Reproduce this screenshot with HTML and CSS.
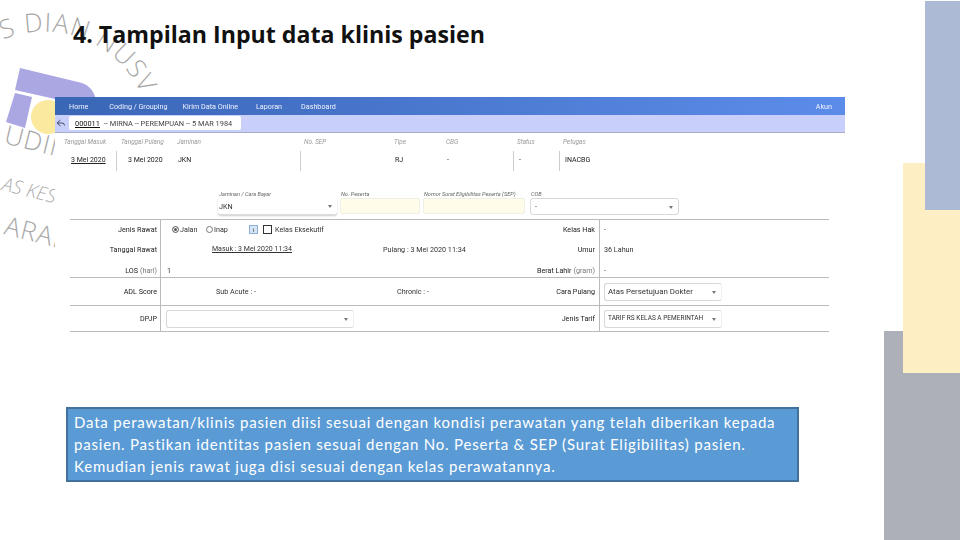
FILE: index.html
```html
<!DOCTYPE html>
<html lang="id">
<head>
<meta charset="utf-8">
<title>Tampilan Input data klinis pasien</title>
<link rel="stylesheet" href="styles.css">
</head>
<body>
<div class="slide">
  <div class="deco deco-grey"></div>
  <div class="deco deco-yellow"></div>
  <div class="deco deco-blue"></div>
  <svg class="watermark" width="200" height="260" viewBox="0 0 200 260">
    <defs><path id="arc" d="M-6 44 A107 107 0 0 1 151 139"/></defs>
    <text class="wm-text"><textPath href="#arc" startOffset="10">S DIAN NUSV</textPath></text>
    <path class="wm-logo" d="M20 68 L82 83 Q92 86 96 99 L55 99 L15 90 Z"/>
    <path class="wm-logo" d="M15 93 L32 97 L25 128 L6 122 Z"/>
    <circle class="wm-sun" cx="48" cy="117" r="17"/>
    <text class="wm-text" transform="translate(3 143) rotate(14)">UDIN</text>
    <text class="wm-small" transform="translate(1 190) rotate(14)">AS KES</text>
    <text class="wm-text" transform="translate(3 234) rotate(14)">ARAN</text>
  </svg>
  <h1 class="title">4. Tampilan Input data klinis pasien</h1>
  <div class="shot">
    <nav class="nav">
      <span>Home</span><span>Coding / Grouping</span><span>Kirim Data Online</span><span>Laporan</span><span>Dashboard</span>
      <span class="nav-end">Akun</span>
    </nav>
    <div class="subbar">
      <svg class="back" width="10" height="9" viewBox="0 0 10 9"><path d="M4.500 1 L1 4 L4.500 7 M1 4 H6 Q8.500 4 8.500 6.500" fill="none" stroke="#44506e" stroke-width="1"/></svg>
      <div class="pill"><u>000011</u> -- MIRNA -- PEREMPUAN -- 5 MAR 1984</div>
    </div>
    <div class="info">
      <div class="info-col c1"><label>Tanggal Masuk</label><div class="val"><u>3 Mei 2020</u></div></div>
      <div class="info-col c2"><label>Tanggal Pulang</label><div class="val sep">3 Mei 2020</div></div>
      <div class="info-col c3"><label>Jaminan</label><div class="val">JKN</div></div>
      <div class="info-col c4"><label>No. SEP</label><div class="val sep">&nbsp;</div></div>
      <div class="info-col c5"><label>Tipe</label><div class="val">RJ</div></div>
      <div class="info-col c6"><label>CBG</label><div class="val">-</div></div>
      <div class="info-col c7"><label>Status</label><div class="val sep">-</div></div>
      <div class="info-col c8"><label>Petugas</label><div class="val sep">INACBG</div></div>
    </div>
    <div class="fields">
      <div class="field f1"><label>Jaminan / Cara Bayar</label><div class="select flat">JKN<i class="caret"></i></div></div>
      <div class="field f2"><label>No. Peserta</label><div class="input"></div></div>
      <div class="field f3"><label>Nomor Surat Eligibilitas Peserta (SEP)</label><div class="input"></div></div>
      <div class="field f4"><label>COB</label><div class="select">-<i class="caret"></i></div></div>
    </div>
    <div class="table">
      <div class="group g1">
        <div class="th">Jenis Rawat</div>
        <div class="td radios">
          <span class="radio on"></span><span class="opt o1">Jalan</span>
          <span class="radio"></span><span class="opt o2">Inap</span>
          <span class="ibox">i</span><span class="check"></span><span>Kelas Eksekutif</span>
        </div>
        <div class="th2">Kelas Hak</div><div class="td3">-</div>
        <div class="th">Tanggal Rawat</div>
        <div class="td split s1"><span class="a"><u>Masuk : 3 Mei 2020 11:34</u></span><span>Pulang : 3 Mei 2020 11:34</span></div>
        <div class="th2">Umur</div><div class="td3">36 Lahun</div>
        <div class="th r3">LOS <em>(hari)</em></div>
        <div class="td r3">1</div>
        <div class="th2 r3">Berat Lahir <em>(gram)</em></div><div class="td3 r3">-</div>
      </div>
      <div class="group g2">
        <div class="th">ADL Score</div>
        <div class="td split s2"><span class="a">Sub Acute : -</span><span>Chronic : -</span></div>
        <div class="th2">Cara Pulang</div>
        <div class="td3"><div class="select small">Atas Persetujuan Dokter<i class="caret"></i></div></div>
      </div>
      <div class="group g3">
        <div class="th">DPJP</div>
        <div class="td"><div class="select dpjp"><i class="caret"></i></div></div>
        <div class="th2">Jenis Tarif</div>
        <div class="td3"><div class="select small tarif">TARIF RS KELAS A PEMERINTAH<i class="caret"></i></div></div>
      </div>
    </div>
  </div>
  <div class="caption">Data perawatan/klinis pasien diisi sesuai dengan kondisi perawatan yang telah diberikan kepada<br>pasien. Pastikan identitas pasien sesuai dengan No. Peserta &amp; SEP (Surat Eligibilitas) pasien.<br>Kemudian jenis rawat juga disi sesuai dengan kelas perawatannya.</div>
</div>
</body>
</html>
```
FILE: styles.css
```css
* { box-sizing: border-box; }
html, body { margin: 0; padding: 0; background: #fff; }
.slide { position: relative; width: 960px; height: 540px; overflow: hidden; background: #fff; font-family: "Liberation Sans", sans-serif; }

.deco { position: absolute; }
.deco-blue { left: 925px; top: 1px; width: 35px; height: 209px; background: #adbad6; }
.deco-yellow { left: 903px; top: 163px; width: 57px; height: 210px; background: #fdeec4; }
.deco-grey { left: 884px; top: 331px; width: 76px; height: 209px; background: #adb0b8; }

.watermark { position: absolute; left: 0; top: 0; }
.wm-text { font: 300 26px "Open Sans", sans-serif; fill: #a8a8a8; letter-spacing: 1px; }
.wm-small { font: 300 19px "Open Sans", sans-serif; fill: #adadad; font-style: italic; }
.wm-logo { fill: #aaa7e2; }
.wm-sun { fill: #fbe99f; }

.title { position: relative; margin: 0; padding: 19px 0 0 73px; height: 97px; font: 700 23.160px/30px "Open Sans", sans-serif; color: #111; }

.shot { position: relative; margin-left: 55px; width: 790px; height: 238px; background: #fff; font: 7.200px/11px Roboto, sans-serif; color: #333; filter: blur(.35px); }

.nav { display: flex; align-items: center; height: 18px; padding: 0 13px 0 14px; background: linear-gradient(90deg, #3a66b6, #5c8cea); color: #eef2ff; font-size: 7.200px; }
.nav span:nth-child(1) { margin-right: 21px; }
.nav span:nth-child(2) { margin-right: 15px; }
.nav span:nth-child(3) { margin-right: 18px; }
.nav span:nth-child(4) { margin-right: 19px; }
.nav-end { margin-left: auto; }

.subbar { display: flex; align-items: center; height: 18px; padding-left: 1px; background: #c8cffa; border-bottom: 1px solid #a9adc5; }
.back { margin-right: 3px; }
.pill { display: flex; align-items: center; gap: 2px; width: 172px; height: 14px; padding-left: 6px; margin-bottom: 1px; background: #fff; border-radius: 2px; color: #444; white-space: pre; font-size: 7.400px; }
.pill u { color: #111; }

.info { display: grid; grid-template-columns: 56px 61px 123px 90px 52px 71px 46px 100px; height: 57px; padding-top: 4px; margin-left: 5px; }
.info-col label { display: block; height: 13px; padding-left: 4px; font-size: 6.400px; font-style: italic; color: #999; }
.c2 label { padding-left: 5px; }
.c3 label { padding-left: 0; }
.val { height: 20px; margin-top: 1px; padding: 4px 0 0 5px; color: #222; font-size: 7px; }
.c1 .val { padding-left: 11px; }
.c2 .val { padding-left: 11px; }
.c3 .val { padding-left: 1px; }
.sep { border-left: 1px solid #ccc; }

.fields { display: flex; height: 29px; padding-left: 163px; }
.field label { display: block; height: 8px; padding-left: 1px; font-size: 5.600px; line-height: 8px; font-style: italic; color: #666; white-space: nowrap; }
.f1 { width: 122px; } .f2 { width: 83px; } .f3 { width: 107px; } .f4 { width: 149px; }
.input { width: 80px; height: 16px; background: #fffde9; border-radius: 2px; border: 1px solid #f0efe6; }
.f3 .input { width: 102px; }
.select { position: relative; display: flex; align-items: center; height: 17px; padding-left: 4px; background: #fff; border: 1px solid #d8d8d8; border-radius: 3px; color: #333; white-space: nowrap; }
.flat { width: 119px; border: 0; border-bottom: 1px solid #ddd; box-shadow: 0 1px 2px #ccc; padding-left: 1px; }
.caret { position: absolute; right: 5px; top: 7px; width: 0; height: 0; border: 2.500px solid transparent; border-top: 3px solid #777; border-bottom: 0; }

.table { margin: 0 16px 0 15px; border-top: 1px solid #bbb; }
.group { display: grid; grid-template-columns: 90px 329px 110px 230px; border-bottom: 1px solid #bbb; }
.g1 { grid-template-rows: 18px 22px 17px; }
.g2 { height: 28px; }
.g3 { height: 26px; }
.th, .th2 { display: flex; align-items: center; justify-content: flex-end; gap: 2px; color: #222; white-space: nowrap; }
.th { padding-right: 3px; }
.th2 { padding-right: 4px; }
.th em, .th2 em { font-style: normal; color: #777; }
.td { display: flex; align-items: center; border-left: 1px solid #bbb; padding-left: 6px; color: #333; }
.td3 { display: flex; align-items: center; border-left: 1px solid #bbb; padding-left: 4px; }
.r3 { padding-top: 3px; }
.s1 .a { width: 171px; margin-left: 45px; font-size: 7px; }
.s2 .a { width: 181px; margin-left: 49px; }
.radio { width: 7px; height: 7px; border: 1px solid #777; border-radius: 50%; background: #fff; flex: none; }
.radio.on { margin-left: 5px; background: #555; box-shadow: inset 0 0 0 1px #fff; }
.opt { margin-left: 1px; }
.o1 { width: 26px; }
.o2 { width: 35px; }
.ibox { display: flex; align-items: center; justify-content: center; width: 9px; height: 9px; background: #d6e4f6; border: 1px solid #8fb0d8; font-size: 6px; color: #234; }
.check { width: 9px; height: 9px; margin: 0 3px 0 5px; border: 1px solid #333; background: #fff; }
.small { width: 118px; height: 18px; padding-left: 3px; font-size: 7.900px; border-right-color: #f0f0f0; }
.tarif { font-size: 6.500px; }
.dpjp { width: 188px; height: 18px; margin-left: -1px; border-right-color: #eee; }

.caption { position: relative; margin: 72px 0 0 66px; width: 733px; height: 75px; padding: 2px 0 0 6px; background: #5b9bd5; border: 2px solid #41719c; color: #fff; font: 15px/22px Lato, sans-serif; letter-spacing: .8px; white-space: nowrap; }
```
